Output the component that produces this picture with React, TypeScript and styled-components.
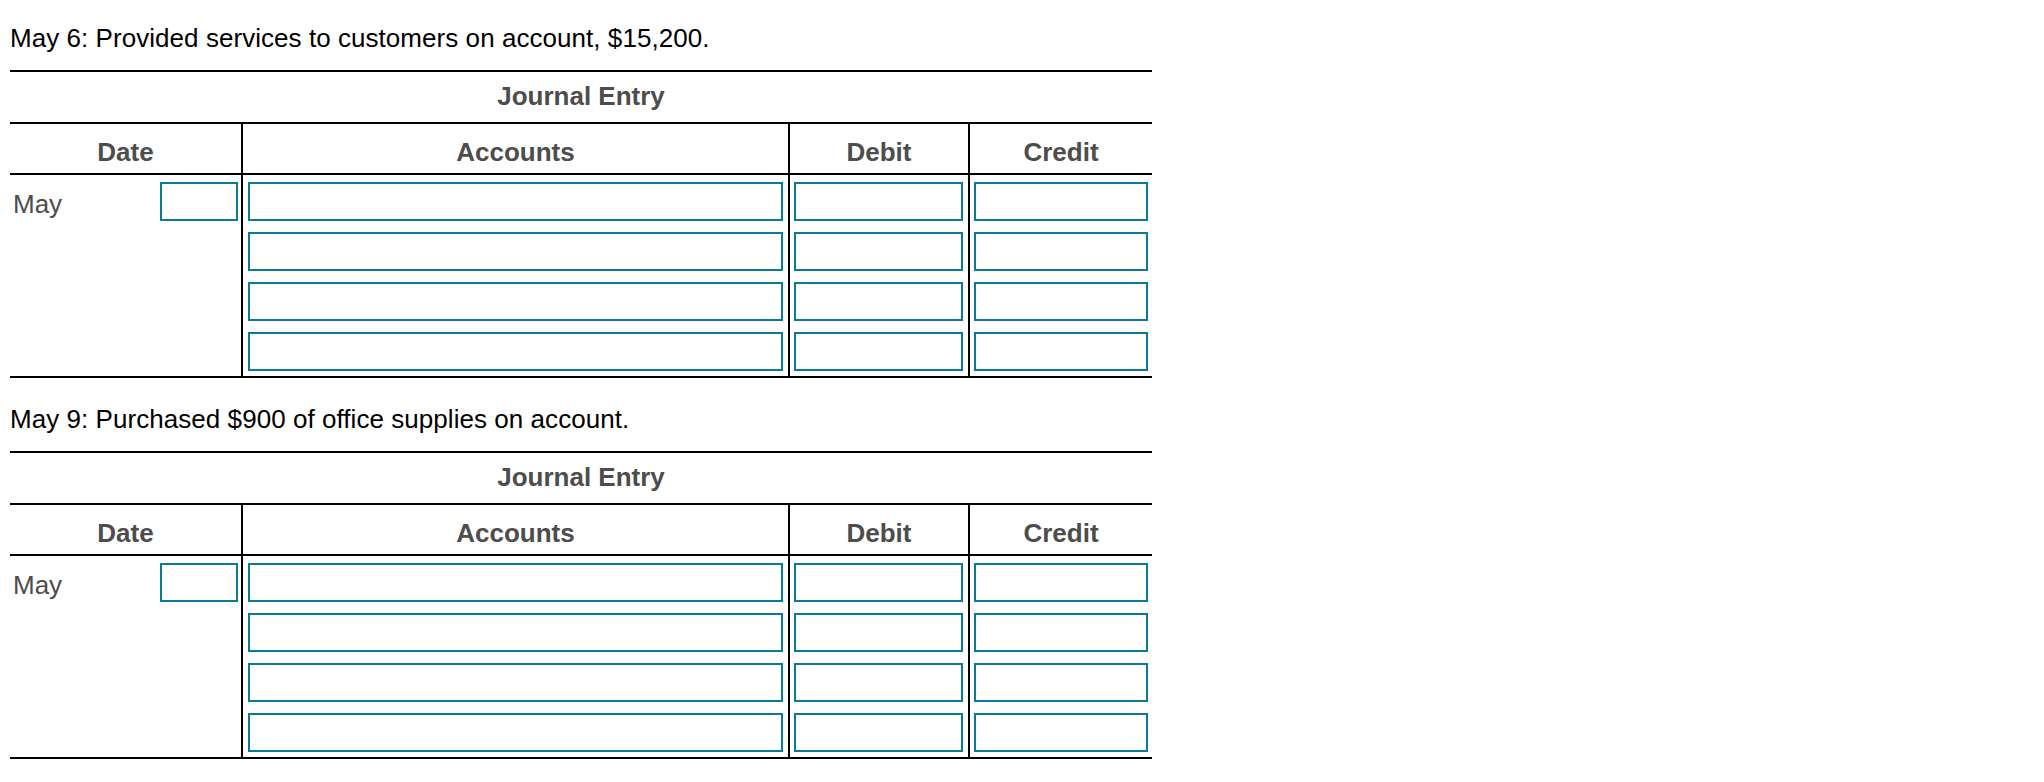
import React from "react";
import styled, { createGlobalStyle } from "styled-components";

const GlobalStyle = createGlobalStyle`
  *, *::before, *::after { box-sizing: border-box; }
  html, body { margin: 0; padding: 0; background: #ffffff; }
  body { font-family: "Liberation Sans", Arial, Helvetica, sans-serif; }
`;

const TEAL = "#0b7a99";
const INK = "#4d4d4d";
const FONT_SIZE = "26px";

const Page = styled.main`
  width: 1152px;
  padding: 23px 0 0 10px;
`;

const Section = styled.section`
  & + & {
    margin-top: 26px;
  }
`;

const Prompt = styled.p`
  margin: 0 0 17px;
  font-size: ${FONT_SIZE};
  line-height: 30px;
  color: #000000;
  letter-spacing: 0.05px;
`;

const Table = styled.div`
  border-top: 2px solid #000000;
  border-bottom: 2px solid #000000;
`;

const Caption = styled.div`
  height: 50px;
  padding-top: 10px;
  text-align: center;
  font-size: ${FONT_SIZE};
  font-weight: 700;
  line-height: 28px;
  color: ${INK};
`;

const Grid = styled.div`
  display: grid;
  grid-template-columns: 231px 547px 180px 184px;
`;

const HeaderRow = styled(Grid)`
  height: 53px;
  border-top: 2px solid #000000;
  border-bottom: 2px solid #000000;
`;

const HeaderCell = styled.div<{ $divided?: boolean }>`
  padding-top: 14px;
  text-align: center;
  font-size: ${FONT_SIZE};
  font-weight: 700;
  line-height: 28px;
  color: ${INK};
  border-left: ${(p) => (p.$divided ? "2px solid #000000" : "none")};
`;

const DateCell = styled.div`
  display: flex;
  align-items: flex-start;
  justify-content: space-between;
  padding: 7px 3px 5px 3px;
`;

const MonthLabel = styled.span`
  margin-top: 8px;
  font-size: ${FONT_SIZE};
  line-height: 28px;
  color: ${INK};
`;

const EntryColumn = styled.div<{ $left: number; $right: number }>`
  display: flex;
  flex-direction: column;
  gap: 11px;
  padding: 7px ${(p) => p.$right}px 5px ${(p) => p.$left}px;
  border-left: 2px solid #000000;
`;

const Field = styled.input<{ $width?: number }>`
  display: block;
  width: ${(p) => (p.$width ? `${p.$width}px` : "100%")};
  height: 39px;
  margin: 0;
  padding: 0 6px;
  border: 2px solid ${TEAL};
  border-radius: 0;
  background: #ffffff;
  font-family: "Liberation Sans", Arial, sans-serif;
  font-size: 20px;
  outline: none;
`;

const columns = [
  { key: "accounts", label: "Accounts", left: 5, right: 5 },
  { key: "debit", label: "Debit", left: 4, right: 5 },
  { key: "credit", label: "Credit", left: 4, right: 4 },
];

const entries = [
  { id: "may6", prompt: "May 6: Provided services to customers on account, $15,200." },
  { id: "may9", prompt: "May 9: Purchased $900 of office supplies on account." },
];

const ROWS = [0, 1, 2, 3];

function JournalEntry({ id, prompt }: { id: string; prompt: string }) {
  return (
    <Section>
      <Prompt>{prompt}</Prompt>
      <Table>
        <Caption>Journal Entry</Caption>
        <HeaderRow>
          <HeaderCell>Date</HeaderCell>
          {columns.map((c) => (
            <HeaderCell key={c.key} $divided>
              {c.label}
            </HeaderCell>
          ))}
        </HeaderRow>
        <Grid>
          <DateCell>
            <MonthLabel>May</MonthLabel>
            <Field $width={78} aria-label={`${id}-day`} />
          </DateCell>
          {columns.map((c) => (
            <EntryColumn key={c.key} $left={c.left} $right={c.right}>
              {ROWS.map((r) => (
                <Field key={r} aria-label={`${id}-${c.key}-${r}`} />
              ))}
            </EntryColumn>
          ))}
        </Grid>
      </Table>
    </Section>
  );
}

export default function App() {
  return (
    <>
      <GlobalStyle />
      <Page>
        {entries.map((e) => (
          <JournalEntry key={e.id} id={e.id} prompt={e.prompt} />
        ))}
      </Page>
    </>
  );
}
